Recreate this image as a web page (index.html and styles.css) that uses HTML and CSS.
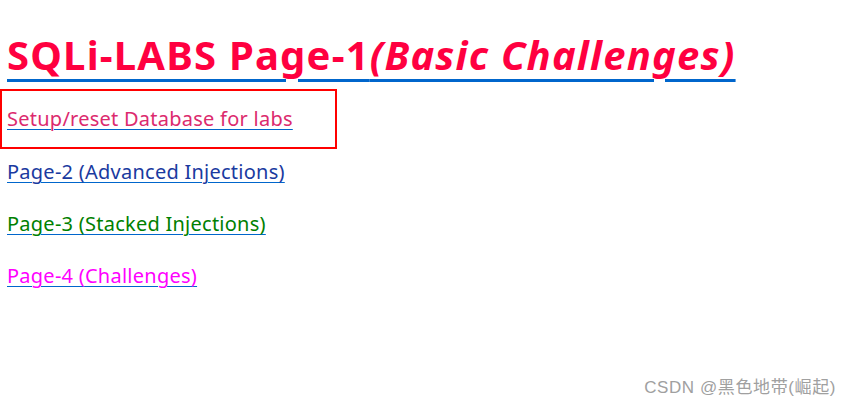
FILE: index.html
```html
<!DOCTYPE html>
<html>
<head>
<meta charset="utf-8">
<link rel="stylesheet" href="styles.css">
</head>
<body>
<div class="page">
  <h1 class="title"><a href="#" class="title-link">SQLi-LABS Page-1</a><a href="#" class="title-link italic">(Basic Challenges)</a></h1>
  <div class="setup-box">
    <a href="#" class="link setup">Setup/reset Database for labs</a>
  </div>
  <div class="row first"><a href="#" class="link p2">Page-2 (Advanced Injections)</a></div>
  <div class="row"><a href="#" class="link p3">Page-3 (Stacked Injections)</a></div>
  <div class="row"><a href="#" class="link p4">Page-4 (Challenges)</a></div>
</div>
<div class="watermark">CSDN @黑色地带(崛起)</div>
</body>
</html>
```
FILE: styles.css
```css
html, body {
  margin: 0;
  padding: 0;
  background: #ffffff;
}
body {
  width: 856px;
  height: 410px;
  position: relative;
  overflow: hidden;
  font-family: "Noto Sans", "Noto Sans CJK SC", sans-serif;
}
.page {
  display: flex;
  flex-direction: column;
}
.title {
  margin: 29px 0 0 7px;
  font-size: 40px;
  line-height: 52px;
  font-weight: 700;
  letter-spacing: 1.2px;
  white-space: nowrap;
}
.title-link {
  color: #ff0040;
  text-decoration: underline;
  text-decoration-color: #0066cc;
  text-decoration-thickness: 3px;
  text-underline-offset: 9px;
}
.italic {
  font-style: italic;
}
.setup-box {
  margin-top: 8px;
  width: 328px;
  height: 56px;
  border: 2px solid #ff0000;
  display: flex;
  align-items: center;
  padding-left: 5px;
}
.link {
  font-size: 20px;
  line-height: 28px;
  letter-spacing: 0.25px;
  text-decoration: underline;
  text-decoration-color: #0066cc;
  text-decoration-thickness: 1px;
  text-underline-offset: 3px;
}
.setup { color: #dc2a6e; }
.p2 { color: #1a3aa0; }
.p3 { color: #008000; }
.p4 { color: #ff00ff; }
.row {
  margin-left: 7px;
  height: 52px;
  display: flex;
  align-items: flex-end;
}
.row.first {
  height: 37px;
}
.watermark {
  position: absolute;
  right: 20px;
  bottom: 12px;
  color: #a0a0a0;
  font-size: 17px;
  letter-spacing: 0.6px;
  font-family: "Liberation Sans", "Noto Sans CJK SC", sans-serif;
}
```
